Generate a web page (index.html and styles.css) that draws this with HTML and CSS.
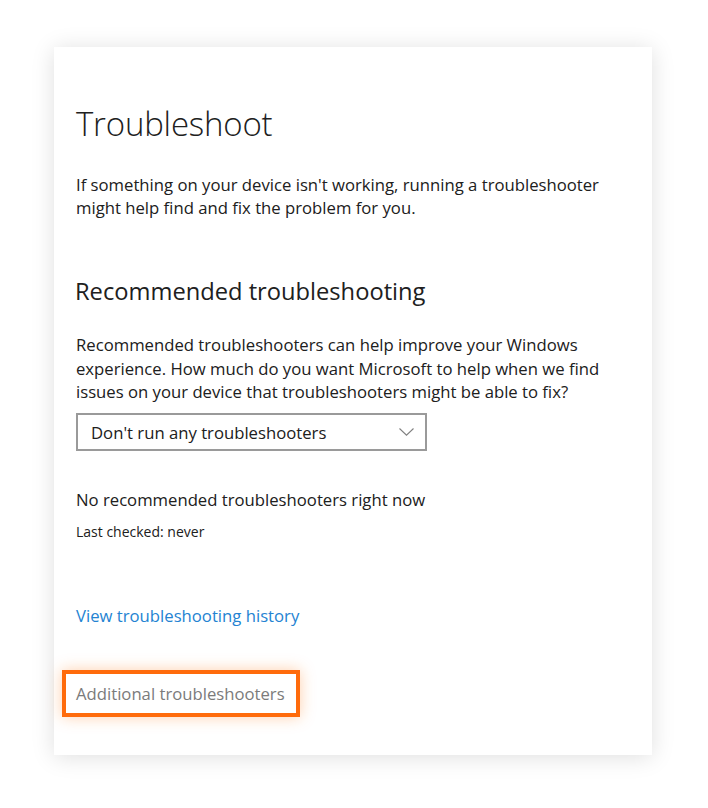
FILE: index.html
```html
<!DOCTYPE html>
<html lang="en">
<head>
<meta charset="utf-8">
<title>Troubleshoot</title>
<link rel="stylesheet" href="styles.css">
</head>
<body>
<div class="card">
  <h1 class="title">Troubleshoot</h1>
  <p class="desc first">If something on your device isn't working, running a troubleshooter<br>might help find and fix the problem for you.</p>
  <h2 class="section">Recommended troubleshooting</h2>
  <p class="desc second">Recommended troubleshooters can help improve your Windows<br>experience. How much do you want Microsoft to help when we find<br>issues on your device that troubleshooters might be able to fix?</p>
  <div class="select">
    <span class="select-text">Don't run any troubleshooters</span>
    <svg class="chev" width="15" height="8" viewBox="0 0 15 8"><path d="M0.5 0.5 L7.5 7.2 L14.5 0.5" fill="none" stroke="#808080" stroke-width="1.1"/></svg>
  </div>
  <p class="status">No recommended troubleshooters right now</p>
  <p class="small">Last checked: never</p>
  <a class="link" href="#">View troubleshooting history</a>
  <div class="highlight"><span class="muted">Additional troubleshooters</span></div>
</div>
</body>
</html>
```
FILE: styles.css
```css
html, body {
  margin: 0;
  padding: 0;
  background: #ffffff;
}
body {
  font-family: "Open Sans", "Noto Sans", sans-serif;
  color: #202020;
  width: 708px;
  height: 808px;
  overflow: hidden;
}
.card {
  box-sizing: border-box;
  margin: 47px 0 0 54px;
  width: 598px;
  height: 708px;
  background: #fff;
  box-shadow: 0 2px 22px rgba(0, 0, 0, 0.13);
  padding: 55px 0 0 22px;
  display: flex;
  flex-direction: column;
  align-items: flex-start;
}
.title {
  margin: 0;
  font-size: 33px;
  font-weight: 300;
  line-height: 44px;
  letter-spacing: -0.2px;
}
.desc {
  margin: 0;
  font-size: 16.7px;
  line-height: 23px;
}
.desc.first {
  margin-top: 27px;
}
.section {
  margin: 56px 0 0 -1px;
  font-size: 23.7px;
  font-weight: 400;
  line-height: 32px;
}
.desc.second {
  margin-top: 26px;
  line-height: 23.5px;
}
.select {
  box-sizing: border-box;
  margin-top: 9.5px;
  width: 351px;
  height: 38px;
  border: 2px solid #9a9a9a;
  display: flex;
  align-items: center;
  justify-content: space-between;
  padding: 0 11px 0 13px;
  font-size: 16.7px;
}
.chev {
  display: block;
}
.status {
  margin: 37px 0 0 0;
  font-size: 16.7px;
  line-height: 23px;
}
.small {
  margin: 10.5px 0 0 0;
  font-size: 14px;
  line-height: 20px;
}
.link {
  margin-top: 62px;
  font-size: 16.7px;
  line-height: 23px;
  color: #2483d2;
  text-decoration: none;
}
.highlight {
  box-sizing: border-box;
  margin: 43px 0 0 -14px;
  width: 238px;
  height: 47px;
  border: 4px solid #ff6b0b;
  box-shadow: 0 0 14px rgba(255, 120, 20, 0.35);
  padding-left: 10px;
  display: flex;
  align-items: center;
}
.muted {
  font-size: 16.7px;
  color: #7b7b7b;
}
```
